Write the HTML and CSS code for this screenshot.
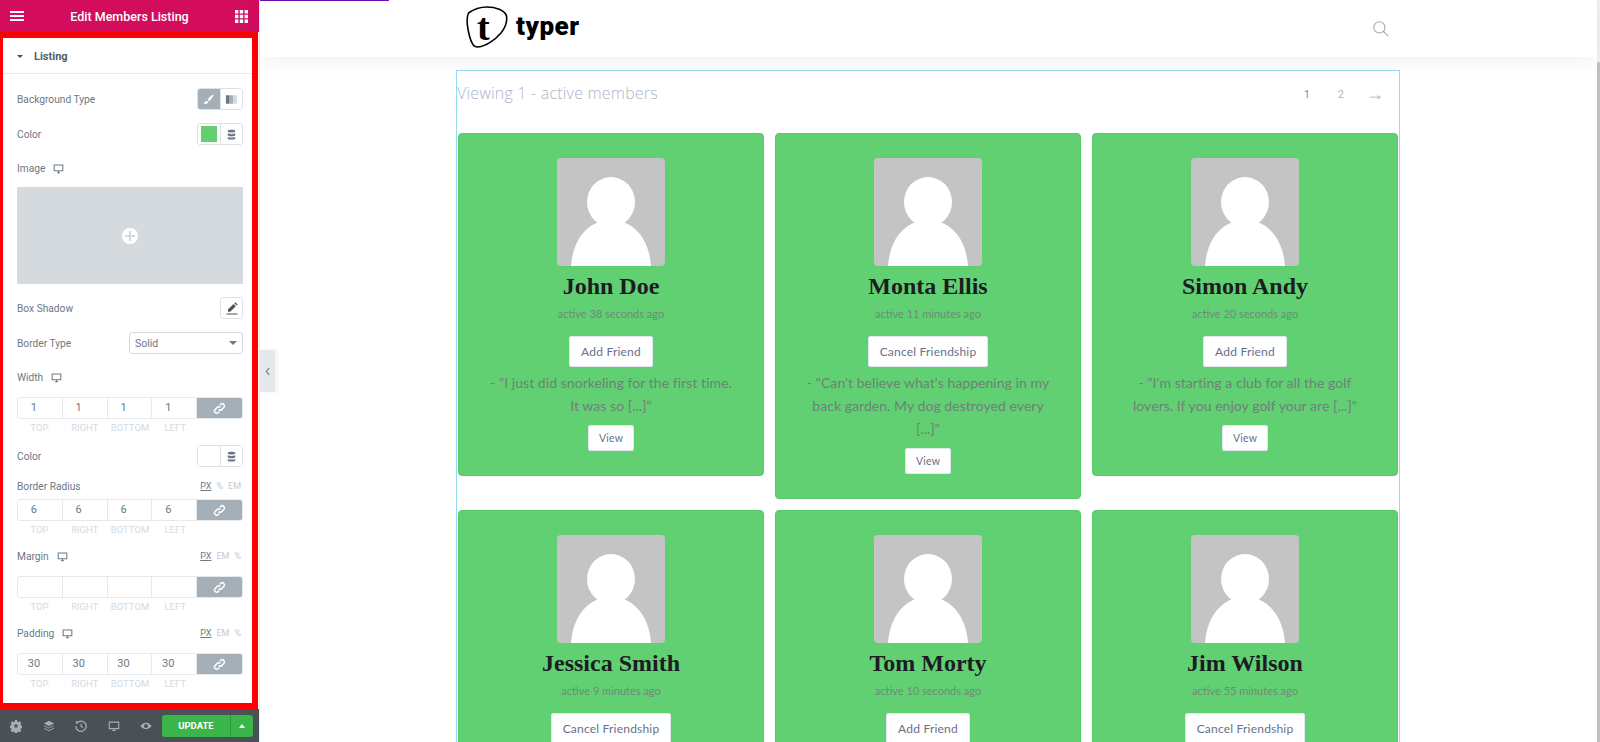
FILE: index.html
```html
<!DOCTYPE html>
<html lang="en">
<head>
    <meta charset="UTF-8">
    <title>Edit Members Listing</title>
    <link rel="stylesheet" href="styles.css">
</head>
<body>

<svg class="defs" width="0" height="0">
    <symbol id="i-monitor" viewBox="0 0 14 14">
        <path d="M1.500 2.500h11v7.500h-11z" fill="none" stroke="currentColor" stroke-width="1.300"/>
        <path d="M5 12.300h4M7 10v2" stroke="currentColor" stroke-width="1.300"/>
    </symbol>
    <symbol id="i-db" viewBox="0 0 14 14">
        <path d="M3 2.600C3 1.500 11 1.500 11 2.600V4C11 5 3 5 3 4zM3 5.600C5 6.600 9 6.600 11 5.600V8C11 9 3 9 3 8zM3 9.600C5 10.600 9 10.600 11 9.600V11.600C11 12.800 3 12.800 3 11.600z" fill="currentColor"/>
    </symbol>
    <symbol id="i-link" viewBox="0 0 14 14">
        <path d="M6 8.200a2.400 2.400 0 0 0 3.400 0l2.200-2.200A2.400 2.400 0 0 0 8.200 2.600L7.200 3.600M8 5.800a2.400 2.400 0 0 0-3.400 0L2.400 8a2.400 2.400 0 0 0 3.400 3.400l1-1" fill="none" stroke="currentColor" stroke-width="1.600"/>
    </symbol>
    <symbol id="i-avatar" viewBox="0 0 108 108">
        <rect width="108" height="108" fill="#c4c4c4"/>
        <ellipse cx="54" cy="44" rx="24" ry="25" fill="#fff"/>
        <path d="M14 108C16 80 32 62 54 62S92 80 94 108z" fill="#fff"/>
    </symbol>
</svg>

<div class="page">

    <aside class="panel">
        <div class="panel-head">
            <span class="burger"><i></i><i></i><i></i></span>
            <span class="panel-title">Edit Members Listing</span>
            <svg class="grid-ico" width="13" height="13" viewBox="0 0 13 13" fill="#fff">
                <path d="M0 0h3.400v3.400H0zM4.800 0h3.400v3.400H4.800zM9.600 0H13v3.400H9.600zM0 4.800h3.400v3.400H0zM4.800 4.800h3.400v3.400H4.800zM9.600 4.800H13v3.400H9.600zM0 9.600h3.400V13H0zM4.800 9.600h3.400V13H4.800zM9.600 9.600H13V13H9.600z"/>
            </svg>
        </div>

        <div class="panel-body">
            <div class="section-head"><span class="caret"></span>Listing</div>

            <div class="fields">
                <div class="row first">
                    <label>Background Type</label>
                    <div class="pair">
                        <span class="cell on">
                            <svg width="13" height="13" viewBox="0 0 14 14"><path d="M12.600 1.400C10 2.600 7.400 5 6 7.400l1.600 1.400c2.200-1.800 4.200-4.600 5-7.400zM5 8.400C3.400 8.600 3.200 10.600 1.600 11c1.600 1.200 4.800 1 5.200-1.200z" fill="#fff"/></svg>
                        </span>
                        <span class="cell">
                            <svg width="13" height="13" viewBox="0 0 14 14"><path d="M1 2.500h4v9H1z" fill="#6d7882"/><path d="M5 2.500h4v9H5z" fill="#a4afb7"/><path d="M9 2.500h4v9H9z" fill="#d5dadf"/></svg>
                        </span>
                    </div>
                </div>

                <div class="row">
                    <label>Color</label>
                    <div class="pair">
                        <span class="cell swatch"><i></i></span>
                        <span class="cell"><svg class="ico" width="13" height="13"><use href="#i-db"/></svg></span>
                    </div>
                </div>

                <div class="row image-row">
                    <label>Image <svg class="ico mon" width="11" height="11"><use href="#i-monitor"/></svg></label>
                </div>

                <div class="image-box"><span class="plus"></span></div>

                <div class="row after-image">
                    <label>Box Shadow</label>
                    <span class="cell single">
                        <svg width="14" height="14" viewBox="0 0 14 14" fill="#495157"><path d="M3 8.600L8.600 3l2.200 2.200-5.600 5.600H3zM9.400 2.200l1-1 2.200 2.200-1 1zM1.500 12.400h11v1h-11z"/></svg>
                    </span>
                </div>

                <div class="row">
                    <label>Border Type</label>
                    <div class="select">Solid<span class="caret"></span></div>
                </div>

                <div class="row width-row">
                    <label>Width <svg class="ico mon" width="11" height="11"><use href="#i-monitor"/></svg></label>
                </div>

                <div class="dims">
                    <span>1</span><span>1</span><span>1</span><span>1</span>
                    <b><svg width="13" height="13"><use href="#i-link"/></svg></b>
                </div>
                <div class="dim-labels"><span>Top</span><span>Right</span><span>Bottom</span><span>Left</span></div>

                <div class="row color-row">
                    <label>Color</label>
                    <div class="pair">
                        <span class="cell"></span>
                        <span class="cell"><svg class="ico" width="13" height="13"><use href="#i-db"/></svg></span>
                    </div>
                </div>

                <div class="row radius-row">
                    <label>Border Radius</label>
                    <div class="units"><u>PX</u><span>%</span><span>EM</span></div>
                </div>

                <div class="dims near">
                    <span>6</span><span>6</span><span>6</span><span>6</span>
                    <b><svg width="13" height="13"><use href="#i-link"/></svg></b>
                </div>
                <div class="dim-labels"><span>Top</span><span>Right</span><span>Bottom</span><span>Left</span></div>

                <div class="row after-dims">
                    <label>Margin <svg class="ico mon" width="11" height="11"><use href="#i-monitor"/></svg></label>
                    <div class="units"><u>PX</u><span>EM</span><span>%</span></div>
                </div>

                <div class="dims">
                    <span></span><span></span><span></span><span></span>
                    <b><svg width="13" height="13"><use href="#i-link"/></svg></b>
                </div>
                <div class="dim-labels"><span>Top</span><span>Right</span><span>Bottom</span><span>Left</span></div>

                <div class="row after-dims">
                    <label>Padding <svg class="ico mon" width="11" height="11"><use href="#i-monitor"/></svg></label>
                    <div class="units"><u>PX</u><span>EM</span><span>%</span></div>
                </div>

                <div class="dims">
                    <span>30</span><span>30</span><span>30</span><span>30</span>
                    <b><svg width="13" height="13"><use href="#i-link"/></svg></b>
                </div>
                <div class="dim-labels"><span>Top</span><span>Right</span><span>Bottom</span><span>Left</span></div>
            </div>
        </div>

        <div class="panel-foot">
            <svg class="foot-ico" width="12" height="14" viewBox="0 0 14 14"><path fill-rule="evenodd" d="M5.800 0h2.400l.4 2 1.200.6 1.800-1 1.600 1.800-1 1.600.5 1.300 2 .4v2.600l-2 .4-.5 1.300 1 1.600-1.600 1.800-1.800-1-1.200.6-.4 2H5.800l-.4-2-1.200-.6-1.800 1L.8 12.600l1-1.600-.5-1.300-2-.4V6.700l2-.4.5-1.300-1-1.600L2.400 1.600l1.800 1 1.200-.6zM7 5a2 2 0 1 0 0 4 2 2 0 0 0 0-4z"/></svg>
            <svg class="foot-ico" width="12" height="14" viewBox="0 0 14 14"><path d="M7 1l6 3-6 3-6-3zM1.800 6.300L7 8.900l5.200-2.600L13 7l-6 3-6-3zM1.800 9.300L7 11.900l5.200-2.600.8.700-6 3-6-3z"/></svg>
            <svg class="foot-ico" width="12" height="14" viewBox="0 0 14 14"><path d="M2.400 3.400A6 6 0 1 1 1 7" fill="none" stroke="currentColor" stroke-width="1.500"/><path d="M.8 1.500l4 .4-3.400 3zM6.400 4h1.300v3l2 1.200-.6 1L6.400 7.800z"/></svg>
            <svg class="foot-ico" width="12" height="14"><use href="#i-monitor"/></svg>
            <svg class="foot-ico" width="12" height="14" viewBox="0 0 15 14"><path fill-rule="evenodd" d="M7.500 3C11 3 13.500 5.500 14.500 7c-1 1.500-3.500 4-7 4S1.500 8.500.5 7c1-1.500 3.500-4 7-4zm0 1.500a2.500 2.500 0 1 0 0 5 2.500 2.500 0 0 0 0-5z"/></svg>
            <div class="update">
                <span class="update-main">UPDATE</span>
                <span class="update-more"></span>
            </div>
        </div>
    </aside>

    <main class="site">
        <div class="progress"></div>
        <span class="handle">
            <svg width="5" height="9" viewBox="0 0 6 10"><path d="M5 1L1.500 5 5 9" fill="none" stroke="#6d7882" stroke-width="1.300"/></svg>
        </span>

        <header class="site-head">
            <div class="site-head-in">
                <a class="logo">
                    <span class="logo-mark">
                        <svg width="44" height="48" viewBox="0 0 44 48">
                            <path d="M3.500 8C9 4 15 2 22 2C30 2 40 5 41.500 11C42.500 17 40 23 36 28C30 35 20 42 12 42C8 42 6 37 4.500 31C3 25 .5 14 3.500 8Z" fill="none" stroke="#000" stroke-width="1.600"/>
                        </svg>
                        <span class="logo-t">t</span>
                    </span>
                    <span class="logo-word">typer</span>
                </a>
                <svg class="search" width="16" height="16" viewBox="0 0 20 20">
                    <circle cx="8" cy="8" r="7" fill="none" stroke="#aaa" stroke-width="1.400"/>
                    <path d="M13 13L19 19" stroke="#aaa" stroke-width="1.400"/>
                </svg>
            </div>
        </header>

        <section class="members">
            <div class="members-top">
                <span class="viewing">Viewing 1 - active members</span>
                <div class="pager">
                    <span class="current">1</span>
                    <span>2</span>
                    <span class="arrow">→</span>
                </div>
            </div>

            <div class="cards">
                <article class="card">
                    <svg class="avatar"><use href="#i-avatar"/></svg>
                    <h3>John Doe</h3>
                    <p class="active">active 38 seconds ago</p>
                    <a class="btn">Add Friend</a>
                    <p class="quote">- "I just did snorkeling for the first time.<br>It was so [...]"</p>
                    <a class="btn small">View</a>
                </article>

                <article class="card">
                    <svg class="avatar"><use href="#i-avatar"/></svg>
                    <h3>Monta Ellis</h3>
                    <p class="active">active 11 minutes ago</p>
                    <a class="btn">Cancel Friendship</a>
                    <p class="quote">- "Can't believe what's happening in my<br>back garden. My dog destroyed every<br>[...]"</p>
                    <a class="btn small">View</a>
                </article>

                <article class="card">
                    <svg class="avatar"><use href="#i-avatar"/></svg>
                    <h3>Simon Andy</h3>
                    <p class="active">active 20 seconds ago</p>
                    <a class="btn">Add Friend</a>
                    <p class="quote">- "I'm starting a club for all the golf<br>lovers. If you enjoy golf your are [...]"</p>
                    <a class="btn small">View</a>
                </article>

                <article class="card">
                    <svg class="avatar"><use href="#i-avatar"/></svg>
                    <h3>Jessica Smith</h3>
                    <p class="active">active 9 minutes ago</p>
                    <a class="btn">Cancel Friendship</a>
                </article>

                <article class="card">
                    <svg class="avatar"><use href="#i-avatar"/></svg>
                    <h3>Tom Morty</h3>
                    <p class="active">active 10 seconds ago</p>
                    <a class="btn">Add Friend</a>
                </article>

                <article class="card">
                    <svg class="avatar"><use href="#i-avatar"/></svg>
                    <h3>Jim Wilson</h3>
                    <p class="active">active 55 minutes ago</p>
                    <a class="btn">Cancel Friendship</a>
                </article>
            </div>
        </section>
    </main>

    <div class="scrollbar"><i></i></div>
</div>

</body>
</html>
```

FILE: styles.css
```css
* {
    padding: 0;
    margin: 0;
    box-sizing: border-box;
}
html, body {
    height: 100%;
    overflow: hidden;
}
body {
    font-family: Roboto, "Liberation Sans", sans-serif;
    background-color: #fff;
}
.defs {
    position: absolute;
}
.page {
    display: flex;
    height: 742px;
}

/* left panel */
.panel {
    width: 260px;
    flex: none;
    display: flex;
    flex-direction: column;
    background-color: #fff;
    border-right: 1px solid #eceef0;
}
.panel-head {
    height: 32px;
    flex: none;
    display: flex;
    align-items: center;
    justify-content: space-between;
    padding: 0 11px 0 10px;
    background-color: #d30c5c;
    color: #fff;
}
.burger i {
    display: block;
    width: 14px;
    height: 2px;
    margin: 2px 0;
    background-color: #fff;
}
.panel-title {
    font-size: 12.500px;
    font-weight: 500;
}
.panel-body {
    width: 258px;
    height: 677px;
    flex: none;
    border: solid #f00;
    border-width: 6px 6px 6px 3px;
    overflow: hidden;
}
.section-head {
    height: 36px;
    display: flex;
    align-items: center;
    padding: 2px 0 0 14px;
    border-bottom: 1px solid #e6e9ec;
    font-size: 11px;
    font-weight: 700;
    color: #556068;
}
.section-head .caret {
    margin-right: 11px;
}
.caret {
    display: inline-block;
    width: 0;
    height: 0;
    border-top: 3px solid #495157;
    border-left: 3px solid transparent;
    border-right: 3px solid transparent;
}
.fields {
    padding: 0 9px 0 14px;
}
.row {
    height: 22px;
    margin-top: 13px;
    display: flex;
    align-items: center;
    justify-content: space-between;
}
.row.first {
    margin-top: 14px;
}
.row.image-row {
    margin-top: 12px;
}
.row.after-image {
    margin-top: 13px;
}
.row.width-row {
    margin-top: 12px;
}
.row.color-row {
    margin-top: 8px;
}
.row.radius-row {
    margin-top: 8px;
}
.row.after-dims {
    margin-top: 6px;
}
.row label {
    display: flex;
    align-items: center;
    font-size: 10.200px;
    color: #6d7882;
}
.ico {
    color: #6d7882;
}
.mon {
    margin-left: 8px;
}
.pair {
    display: flex;
    width: 46px;
    height: 22px;
    border: 1px solid #dfe2e5;
    border-radius: 3px;
    overflow: hidden;
}
.cell {
    flex: 1;
    display: flex;
    align-items: center;
    justify-content: center;
    background-color: #fff;
}
.cell + .cell {
    border-left: 1px solid #dfe2e5;
}
.cell.on {
    background-color: #a4afb7;
}
.swatch i {
    display: block;
    width: 16px;
    height: 16px;
    background-color: #61d073;
}
.cell.single {
    flex: none;
    width: 23px;
    height: 22px;
    border: 1px solid #dfe2e5;
    border-radius: 3px;
}
.image-box {
    height: 97px;
    margin-top: 8px;
    display: flex;
    align-items: center;
    justify-content: center;
    background-color: #d5dadf;
}
.plus {
    position: relative;
    width: 16px;
    height: 16px;
    border-radius: 50%;
    background-color: #fff;
}
.plus:before,
.plus:after {
    content: "";
    position: absolute;
    background-color: #d5dadf;
}
.plus:before {
    left: 3px;
    top: 7px;
    width: 10px;
    height: 2px;
}
.plus:after {
    left: 7px;
    top: 3px;
    width: 2px;
    height: 10px;
}
.select {
    width: 114px;
    height: 22px;
    display: flex;
    align-items: center;
    justify-content: space-between;
    padding: 0 5px;
    border: 1px solid #d5dadf;
    border-radius: 3px;
    font-size: 10.500px;
    color: #6d7882;
}
.select .caret {
    border-top-width: 4px;
    border-left-width: 4px;
    border-right-width: 4px;
    border-top-color: #6d7882;
}
.dims {
    display: grid;
    grid-template-columns: repeat(5, 1fr);
    height: 22px;
    margin-top: 9px;
    border: 1px solid #e6e9ec;
    border-radius: 3px;
    overflow: hidden;
}
.dims.near {
    margin-top: 2px;
}
.dims span {
    padding-right: 12px;
    border-right: 1px solid #e6e9ec;
    text-align: center;
    font-size: 11px;
    line-height: 20px;
    color: #6d7882;
}
.dims b {
    display: flex;
    align-items: center;
    justify-content: center;
    background-color: #a4afb7;
    color: #fff;
}
.dim-labels {
    display: grid;
    grid-template-columns: repeat(5, 1fr);
    height: 18px;
    font-size: 9.500px;
    line-height: 18px;
    text-align: center;
    text-transform: uppercase;
    color: #d5dadf;
}
.units {
    display: flex;
    gap: 5px;
    padding-right: 2px;
    font-size: 9px;
    color: #c2cbd2;
}
.units u {
    color: #6d7882;
}
.panel-foot {
    height: 33px;
    flex: 1;
    display: flex;
    align-items: center;
    padding-left: 10px;
    background-color: #495157;
}
.foot-ico {
    flex: none;
    margin-right: 20.600px;
    fill: #a4afb7;
    color: #a4afb7;
}
.update {
    display: flex;
    width: 91px;
    height: 22px;
    margin-left: -11px;
    border-radius: 3px;
    overflow: hidden;
    background-color: #39b54a;
    color: #fff;
}
.update-main {
    flex: 1;
    text-align: center;
    font-size: 9.500px;
    font-weight: 700;
    line-height: 22px;
    text-transform: uppercase;
}
.update-more {
    width: 23px;
    display: flex;
    align-items: center;
    justify-content: center;
    border-left: 1px solid #2a9a3a;
}
.update-more:after {
    content: "";
    border-bottom: 4px solid #fff;
    border-left: 3px solid transparent;
    border-right: 3px solid transparent;
}

/* site preview */
.site {
    position: relative;
    flex: 1;
    min-width: 0;
}
.progress {
    position: absolute;
    left: 0;
    top: 0;
    z-index: 3;
    width: 129px;
    height: 1px;
    background-color: #6a0dad;
}
.handle {
    position: absolute;
    left: 0;
    top: 350px;
    z-index: 3;
    width: 15px;
    height: 42px;
    display: flex;
    align-items: center;
    justify-content: center;
    background-color: #e6e9ec;
    box-shadow: 2px 0 4px rgba(0, 0, 0, .06);
}
.site-head {
    position: relative;
    height: 57px;
    background-color: #fff;
    box-shadow: 0 4px 22px rgba(0, 0, 0, .06);
}
.site-head-in {
    width: 944px;
    height: 57px;
    margin-left: 196px;
    display: flex;
    align-items: center;
    justify-content: space-between;
    padding: 0 11px 0 9px;
}
.logo {
    display: flex;
    align-items: center;
    color: #000;
}
.logo-mark {
    position: relative;
    width: 44px;
    height: 48px;
}
.logo-t {
    position: absolute;
    left: 12px;
    top: 0;
    font-family: "Liberation Serif", serif;
    font-size: 38px;
    font-weight: 700;
    line-height: 44px;
}
.logo-word {
    margin: -5px 0 0 7px;
    font-family: Roboto, sans-serif;
    font-size: 26px;
    font-weight: 900;
    letter-spacing: .5px;
}
.members {
    width: 944px;
    margin: 13px 0 0 196px;
    border: 1px solid #93dcf3;
    border-bottom: 0;
}
.members-top {
    height: 62px;
    display: flex;
    justify-content: space-between;
    align-items: flex-start;
    padding-top: 11px;
}
.viewing {
    font-family: "Open Sans", sans-serif;
    font-weight: 300;
    font-size: 16px;
    line-height: 22px;
    letter-spacing: .2px;
    color: #aab6cc;
}
.pager {
    display: flex;
    align-items: center;
    height: 24px;
    padding-right: 15px;
    font-size: 11px;
    color: #aab6cc;
}
.pager span {
    margin-left: 28px;
}
.pager .current {
    color: #5a9bd5;
}
.pager .arrow {
    margin-left: 22px;
    font-size: 18px;
}
.cards {
    display: grid;
    grid-template-columns: repeat(3, 306px);
    column-gap: 11px;
    row-gap: 11px;
    align-items: start;
    margin-left: 1px;
}
.card {
    width: 306px;
    display: flex;
    flex-direction: column;
    align-items: center;
    padding: 24px 0;
    border: 1px solid #55c868;
    border-radius: 4px;
    background-color: #61d073;
}
.avatar {
    display: block;
    width: 108px;
    height: 108px;
    border-radius: 4px;
}
.card h3 {
    margin-top: 8px;
    font-family: "Liberation Serif", serif;
    font-size: 24px;
    font-weight: 700;
    line-height: 24px;
    color: #1c1c22;
}
.active {
    margin-top: 9px;
    font-family: Lato, sans-serif;
    font-size: 11px;
    line-height: 14px;
    color: #6f8a78;
}
.btn {
    display: block;
    height: 31px;
    margin-top: 15px;
    padding: 0 11px;
    border: 1px solid #e2e6ee;
    border-radius: 2px;
    background-color: #fff;
    font-family: Lato, sans-serif;
    font-size: 12px;
    line-height: 29px;
    letter-spacing: .2px;
    color: #67708a;
}
.btn.small {
    height: 26px;
    margin-top: 8px;
    padding: 0 10px;
    font-size: 10.500px;
    line-height: 24px;
}
.quote {
    margin-top: 4px;
    font-family: Lato, sans-serif;
    font-size: 14px;
    line-height: 23px;
    letter-spacing: .05px;
    text-align: center;
    color: #6f8077;
}

.scrollbar {
    width: 3px;
    flex: none;
    background-color: #f1f1f1;
}
.scrollbar i {
    display: block;
    height: 680px;
    margin-top: 62px;
    background-color: #c1c1c1;
}
```
